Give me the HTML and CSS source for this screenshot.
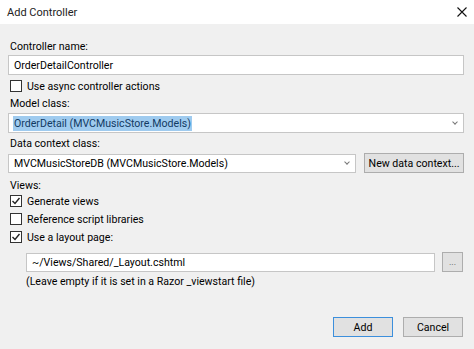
FILE: index.html
```html
<!DOCTYPE html>
<html lang="en">
<head>
    <meta charset="UTF-8">
    <title>Add Controller</title>
    <link rel="stylesheet" href="styles.css">
</head>
<body>
    <div class="dialog">
        <div class="titlebar">
            <span class="title">Add Controller</span>
            <svg class="close" width="10" height="10" viewBox="0 0 10 10">
                <path d="M0.5 0.5 L9.5 9.5 M9.5 0.5 L0.5 9.5" stroke="#111" stroke-width="1.1" fill="none"/>
            </svg>
        </div>

        <div class="content">
            <div class="label first">Controller name:</div>
            <div class="textbox">OrderDetailController</div>

            <label class="check">
                <span class="box"></span>
                <span>Use async controller actions</span>
            </label>

            <div class="label">Model class:</div>
            <div class="combo">
                <span class="selected">OrderDetail (MVCMusicStore.Models)</span>
                <span class="chevron"></span>
            </div>

            <div class="label ctx">Data context class:</div>
            <div class="row">
                <div class="combo narrow">
                    <span>MVCMusicStoreDB (MVCMusicStore.Models)</span>
                    <span class="chevron"></span>
                </div>
                <div class="btn wide">New data context...</div>
            </div>

            <div class="label views">Views:</div>
            <div class="checks">
                <label class="check">
                    <span class="box"><svg width="10" height="10" viewBox="0 0 10 10"><path d="M1.5 5 L4 7.5 L8.5 2" stroke="#222" stroke-width="1.4" fill="none"/></svg></span>
                    <span>Generate views</span>
                </label>
                <label class="check">
                    <span class="box"></span>
                    <span>Reference script libraries</span>
                </label>
                <label class="check">
                    <span class="box"><svg width="10" height="10" viewBox="0 0 10 10"><path d="M1.5 5 L4 7.5 L8.5 2" stroke="#222" stroke-width="1.4" fill="none"/></svg></span>
                    <span>Use a layout page:</span>
                </label>
            </div>

            <div class="layout">
                <div class="row">
                    <div class="textbox grow">~/Views/Shared/_Layout.cshtml</div>
                    <div class="btn dots">...</div>
                </div>
                <div class="hint">(Leave empty if it is set in a Razor _viewstart file)</div>
            </div>

            <div class="actions">
                <div class="btn default">Add</div>
                <div class="btn">Cancel</div>
            </div>
        </div>
    </div>
</body>
</html>
```

FILE: styles.css
```css
* {
    margin: 0;
    padding: 0;
    box-sizing: border-box;
}

body {
    font-family: Roboto, "Noto Sans CJK SC", sans-serif;
    font-size: 10.6px;
    color: #000;
    background: #f0f0f0;
    overflow: hidden;
}

.dialog {
    width: 474px;
    height: 349px;
    display: flex;
    flex-direction: column;
}

.titlebar {
    height: 24px;
    background: #fff;
    display: flex;
    align-items: center;
    justify-content: space-between;
    padding: 0 7px 0 7px;
}

.title {
    color: #222;
    font-size: 11px;
}

.content {
    flex: 1;
    background: #f0f0f0;
    padding: 0 10px 0 8px;
    display: flex;
    flex-direction: column;
    white-space: nowrap;
}

.label {
    line-height: 16px;
    padding-left: 2px;
    margin-top: 2px;
}

.label.first {
    margin-top: 15px;
}

.label.ctx {
    margin-top: 3px;
}

.label.views {
    margin-top: 5px;
    line-height: 15px;
}

.textbox,
.combo {
    height: 20px;
    background: #fff;
    border: 1px solid #c6c6c6;
    display: flex;
    align-items: center;
    padding-left: 5px;
    overflow: hidden;
}

.combo {
    margin-top: 1px;
    justify-content: space-between;
    padding-right: 6px;
}

.combo.narrow {
    width: 349px;
    height: 19px;
}

.selected {
    background: #9fcbef;
    color: #123a63;
    padding: 0 1px;
    line-height: 15px;
    margin-left: -1px;
}

.chevron {
    width: 4px;
    height: 4px;
    border-right: 1px solid #777;
    border-bottom: 1px solid #777;
    transform: rotate(45deg);
    margin-top: -3px;
}

.check {
    display: flex;
    align-items: center;
    gap: 5px;
    height: 16px;
    padding-left: 2px;
}

.content > .check {
    margin-top: 3px;
}

.box {
    width: 12px;
    height: 12px;
    border: 1px solid #333;
    background: #fff;
    display: flex;
    align-items: center;
    justify-content: center;
}

.checks {
    display: flex;
    flex-direction: column;
    gap: 2px;
}

.row {
    display: flex;
    align-items: center;
    gap: 8px;
    margin-top: 1px;
}

.btn {
    height: 20px;
    background: #e1e1e1;
    border: 1px solid #adadad;
    display: flex;
    align-items: center;
    justify-content: center;
    width: 60px;
}

.btn.wide {
    width: 100px;
}

.btn.dots {
    width: 21px;
    color: #555;
    font-size: 9px;
}

.btn.default {
    border-color: #3c8fdc;
}

.layout {
    padding-left: 18px;
    margin-top: 7px;
}

.layout .row {
    gap: 7px;
    margin-top: 0;
    padding-right: 1px;
}

.textbox.grow {
    flex: 1;
    height: 19px;
}

.hint {
    line-height: 16px;
    margin-top: 2px;
}

.actions {
    display: flex;
    justify-content: flex-end;
    gap: 10px;
    margin-top: 27px;
    padding-right: 1px;
}
```
